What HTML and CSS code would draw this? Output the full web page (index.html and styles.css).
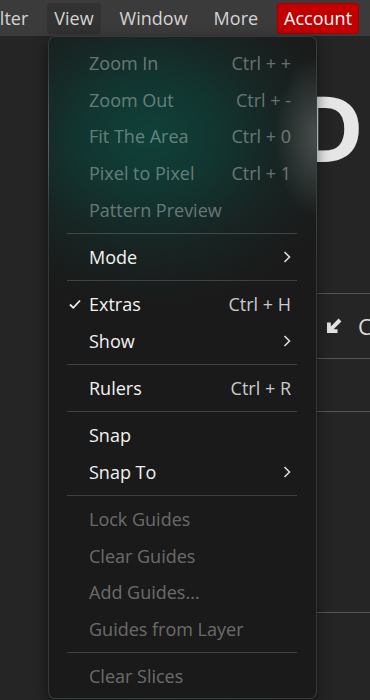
FILE: index.html
```html
<!DOCTYPE html>
<html lang="en">
<head>
  <meta charset="UTF-8" />
  <meta name="viewport" content="width=device-width, initial-scale=1.0" />
  <title>Editor - View menu</title>
  <link rel="stylesheet" href="styles.css">
</head>
<body>
  <header class="menubar">
    <nav class="menubar-items">
      <span class="menubar-item">Filter</span>
      <span class="menubar-item is-open">View</span>
      <span class="menubar-item">Window</span>
      <span class="menubar-item">More</span>
      <span class="menubar-item account">Account</span>
    </nav>
  </header>

  <main class="page">
    <h1 class="page-title">Design</h1>
    <ul class="rows">
      <li class="row row-action">
        <svg class="row-icon" width="16" height="16" viewBox="0 0 16 16">
          <path d="M1 4.5 V15 H11.5 V11.2 H7.6 L15.4 3.4 L12.6 0.6 L4.8 8.4 V4.5 Z" fill="#e2e2e2" />
        </svg>
        <span class="row-text">Collapse all</span>
      </li>
      <li class="row row-empty"></li>
      <li class="row row-tall"></li>
      <li class="row row-empty"></li>
    </ul>
  </main>

  <!-- dropdown: View -->
  <div class="dropdown">
    <div class="dd-item disabled"><span>Zoom In</span><span class="dd-shortcut">Ctrl + +</span></div>
    <div class="dd-item disabled"><span>Zoom Out</span><span class="dd-shortcut">Ctrl + -</span></div>
    <div class="dd-item disabled"><span>Fit The Area</span><span class="dd-shortcut">Ctrl + 0</span></div>
    <div class="dd-item disabled"><span>Pixel to Pixel</span><span class="dd-shortcut">Ctrl + 1</span></div>
    <div class="dd-item disabled"><span>Pattern Preview</span></div>
    <div class="dd-sep"></div>
    <div class="dd-item">
      <span>Mode</span>
      <svg class="dd-chevron" width="8" height="12" viewBox="0 0 8 12"><path d="M1.5 1 L6.5 6 L1.5 11" stroke="#dcdcdc" stroke-width="1.6" fill="none" /></svg>
    </div>
    <div class="dd-sep"></div>
    <div class="dd-item">
      <svg class="dd-check" width="12" height="12" viewBox="0 0 12 12"><path d="M1 6.5 L4.3 9.8 L11 2.5" stroke="#f0f0f0" stroke-width="1.8" fill="none" /></svg>
      <span>Extras</span><span class="dd-shortcut">Ctrl + H</span>
    </div>
    <div class="dd-item">
      <span>Show</span>
      <svg class="dd-chevron" width="8" height="12" viewBox="0 0 8 12"><path d="M1.5 1 L6.5 6 L1.5 11" stroke="#dcdcdc" stroke-width="1.6" fill="none" /></svg>
    </div>
    <div class="dd-sep"></div>
    <div class="dd-item"><span>Rulers</span><span class="dd-shortcut">Ctrl + R</span></div>
    <div class="dd-sep"></div>
    <div class="dd-item"><span>Snap</span></div>
    <div class="dd-item">
      <span>Snap To</span>
      <svg class="dd-chevron" width="8" height="12" viewBox="0 0 8 12"><path d="M1.5 1 L6.5 6 L1.5 11" stroke="#dcdcdc" stroke-width="1.6" fill="none" /></svg>
    </div>
    <div class="dd-sep"></div>
    <div class="dd-item disabled"><span>Lock Guides</span></div>
    <div class="dd-item disabled"><span>Clear Guides</span></div>
    <div class="dd-item disabled"><span>Add Guides...</span></div>
    <div class="dd-item disabled"><span>Guides from Layer</span></div>
    <div class="dd-sep"></div>
    <div class="dd-item disabled"><span>Clear Slices</span></div>
  </div>
</body>
</html>
```

FILE: styles.css
```css
body {
  margin: 0;
  height: 700px;
  overflow: hidden;
  position: relative;
  background-color: #252525;
  font-family: "Open Sans", "Noto Sans", sans-serif;
  color: #e6e6e6;
}

/* top menu bar */
.menubar {
  height: 36px;
  background-color: #3b3b3b;
  overflow: hidden;
}

.menubar-items {
  display: flex;
  gap: 12px;
  margin-left: -21px;
  padding-top: 3px;
}

.menubar-item {
  height: 31px;
  line-height: 30px;
  padding: 0 7px;
  font-size: 18px;
  color: #d4d4d4;
  border-radius: 4px;
  white-space: nowrap;
}

.menubar-item.is-open {
  background-color: #323232;
}

.menubar-item.account {
  background-color: #c30000;
  color: #fff;
  box-shadow: inset 0 0 0 1px #a80000;
}

/* page behind the menu */
.page {
  padding-left: 310px;
  white-space: nowrap;
}

.page-title {
  margin: 45px 0 0 -14px;
  font-size: 92px;
  line-height: 92px;
  font-weight: 700;
  letter-spacing: 14px;
  color: #e6e6e6;
}

.rows {
  list-style: none;
  margin: 120px 0 0;
  padding: 0;
}

.row {
  border-top: 1px solid #565656;
  display: flex;
  align-items: center;
  gap: 16px;
  padding-left: 16px;
}

.row-icon {
  flex-shrink: 0;
}

.row-action {
  height: 64px;
}

.row-empty {
  height: 52px;
}

.row-tall {
  height: 200px;
}

.row-text {
  font-size: 22px;
  color: #dcdcdc;
}

/* dropdown */
.dropdown {
  position: absolute;
  top: 36px;
  left: 48px;
  width: 269px;
  height: 663px;
  box-sizing: border-box;
  padding-top: 7.6px;
  border: 1px solid rgba(255, 255, 255, 0.13);
  border-radius: 7px;
  background:
    radial-gradient(ellipse 42px 80px at 268px 100px, rgba(130, 135, 133, 0.45), rgba(130, 135, 133, 0)),
    radial-gradient(ellipse 200px 165px at 100px 100px, #0f4139 0%, #123530 35%, #172523 65%, rgba(26, 26, 26, 0) 100%),
    #1a1a1a;
  box-shadow: 0 4px 14px rgba(0, 0, 0, 0.5);
}

.dd-item {
  position: relative;
  height: 36.7px;
  display: flex;
  align-items: center;
  justify-content: space-between;
  padding: 0 25px 0 40px;
  font-size: 18px;
  color: #f2f2f2;
  white-space: nowrap;
}

.dd-item.disabled {
  color: rgba(255, 255, 255, 0.37);
}

.dd-shortcut {
  color: #cacaca;
}

.dd-item.disabled .dd-shortcut {
  color: rgba(255, 255, 255, 0.37);
}

.dd-check {
  position: absolute;
  left: 20px;
  top: 12px;
}

.dd-sep {
  height: 1px;
  margin: 4.75px 19px 4.75px 18px;
  background-color: rgba(255, 255, 255, 0.17);
}
```
